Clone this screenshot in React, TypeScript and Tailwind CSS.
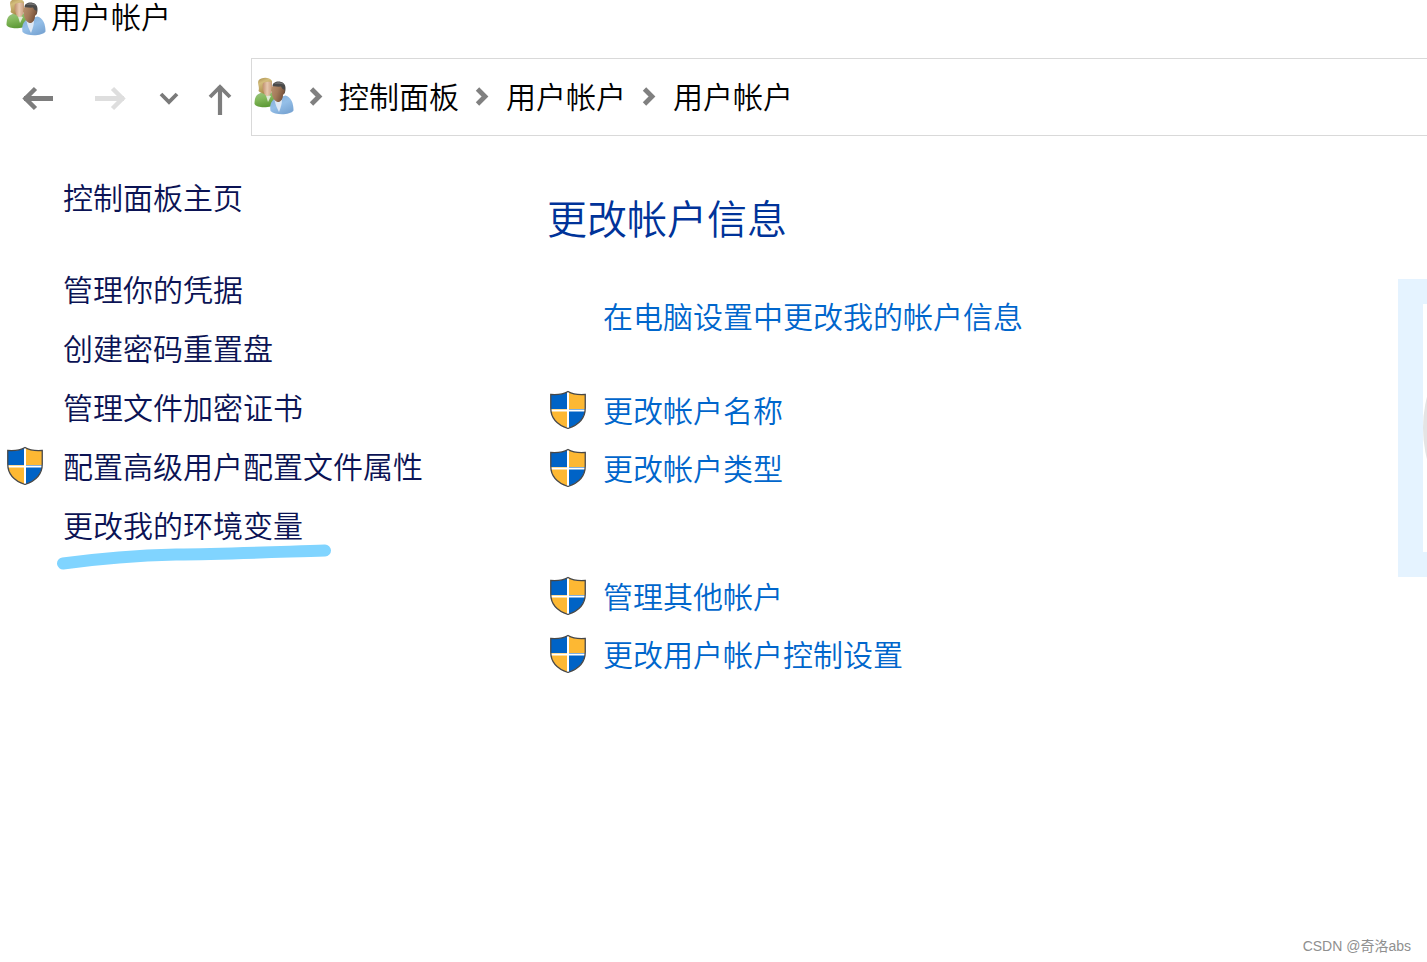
import { Fragment } from 'react';

const crumbs = ['控制面板', '用户帐户', '用户帐户'];

const sideLinks = [
  { label: '管理你的凭据' },
  { label: '创建密码重置盘' },
  { label: '管理文件加密证书' },
  { label: '配置高级用户配置文件属性', shield: true },
  { label: '更改我的环境变量', marked: true },
];

const taskGroups = [
  [{ label: '在电脑设置中更改我的帐户信息', shield: false }],
  [
    { label: '更改帐户名称', shield: true },
    { label: '更改帐户类型', shield: true },
  ],
  [
    { label: '管理其他帐户', shield: true },
    { label: '更改用户帐户控制设置', shield: true },
  ],
];

const groupMargins = ['mt-[38px]', 'mt-9', 'mt-[70px]'];

function UsersIcon({ id }: { id: string }) {
  return (
    <svg viewBox="0 0 40 40" className="size-10 shrink-0" aria-hidden="true">
      <defs>
        <linearGradient id={`${id}-green`} x1="0" y1="0" x2="0.3" y2="1">
          <stop offset="0" stopColor="#9fc587" />
          <stop offset="0.5" stopColor="#82b85a" />
          <stop offset="1" stopColor="#5f9b38" />
        </linearGradient>
        <linearGradient id={`${id}-blue`} x1="0" y1="0" x2="0.6" y2="1">
          <stop offset="0" stopColor="#84acd6" />
          <stop offset="0.55" stopColor="#94bfe8" />
          <stop offset="1" stopColor="#7aa6d4" />
        </linearGradient>
        <linearGradient id={`${id}-hair`} x1="0" y1="0" x2="0.4" y2="1">
          <stop offset="0" stopColor="#a98d4c" />
          <stop offset="0.35" stopColor="#d3bd7c" />
          <stop offset="1" stopColor="#a88a48" />
        </linearGradient>
        <linearGradient id={`${id}-light`} x1="0" y1="0" x2="1" y2="0">
          <stop offset="0" stopColor="#c08f6c" />
          <stop offset="0.5" stopColor="#e6c8ae" />
          <stop offset="1" stopColor="#c99d80" />
        </linearGradient>
        <linearGradient id={`${id}-dark`} x1="0" y1="0" x2="1" y2="0.4">
          <stop offset="0" stopColor="#b8906e" />
          <stop offset="0.5" stopColor="#a37a5a" />
          <stop offset="1" stopColor="#755039" />
        </linearGradient>
      </defs>
      <path d="M0.500 28C0.500 22 2 18.500 6.500 17L17 16C20 18 22 22 22 28C19 31.500 3 33 0.500 28Z" fill={`url(#${id}-green)`} />
      <path d="M11.500 18L14 26L17 20Z" fill="#dfe9d6" />
      <path d="M4.500 15C6 11 3 8 4.500 4.500C7 1 15.500 0.500 18 5L18 15C15 19 8 18.500 4.500 15Z" fill={`url(#${id}-hair)`} />
      <path d="M9 7C11 6 15 5.500 17.500 6C18 9 18 15 16.500 18C15 20.500 12 21 10.500 18C9 15 8 10 9 7Z" fill={`url(#${id}-light)`} />
      <path d="M16.500 35C15.500 29 17 25 21 22.500L31.500 19.500C37 21 39.500 27 39.500 34.500C36 39.500 21 39.500 16.500 35Z" fill={`url(#${id}-blue)`} />
      <path d="M20.500 24C21.500 29 23 32 25 36C26.500 32 28 28 28 24Z" fill="#dde8f4" />
      <path d="M18.500 10C18.500 4 31.500 3.500 31.500 12C31.500 15 31 17 30 18L21 14Z" fill="#4a4a4a" />
      <path d="M20 8C22.500 5.500 28 5.500 30 8.500C27 7.500 23 7.500 20 8Z" fill="#757575" />
      <path d="M18 10.500C20.500 10 24 11 27 10.500C28 12 28.500 14 30.500 13.500C31.500 16 30 18 29 19C29 23 26.500 26.500 23.500 26C19 25 16.500 17 18 10.500Z" fill={`url(#${id}-dark)`} />
    </svg>
  );
}

function ShieldIcon() {
  return (
    <svg viewBox="0 0 36 40" className="h-10 w-9 shrink-0" aria-hidden="true">
      <path d="M18 1.500C13 4.500 7 5 1 4.500V19H18Z" fill="#0063c6" />
      <path d="M18 1.500C23 4.500 29 5 35 4.500V19H18Z" fill="#fdb833" />
      <path d="M1 19C1 29 9 35 18 38.500V19Z" fill="#fdb833" />
      <path d="M35 19C35 29 27 35 18 38.500V19Z" fill="#0063c6" />
      <path d="M18 2V38M1 20.500H35" stroke="#ffffff" strokeWidth="2" />
      <path
        d="M18 1.500C13 4.500 7 5 0.750 4.500V18C0.750 29 9 35.500 18 38.500C27 35.500 35.250 29 35.250 18V4.500C29 5 23 4.500 18 1.500Z"
        fill="none"
        stroke="#474747"
        strokeWidth="1.300"
      />
    </svg>
  );
}

function Chevron() {
  return (
    <svg viewBox="0 0 14 20" className="h-5 w-3.5 shrink-0" aria-hidden="true">
      <path d="M2.500 2L10 9.500L2.500 17" fill="none" stroke="#808080" strokeWidth="4.800" />
    </svg>
  );
}

function NavButtons() {
  return (
    <nav className="flex w-[251px] shrink-0 items-center pt-1 pl-[22px]">
      <button type="button" aria-label="返回" className="mr-10">
        <svg viewBox="0 0 32 32" className="size-8" fill="none" stroke="#7d7d7d">
          <path d="M2 15.500H31" strokeWidth="5" />
          <path d="M13.500 5.500L3.500 15.500L13.500 25.500" strokeWidth="4.500" />
        </svg>
      </button>
      <button type="button" aria-label="前进" disabled className="mr-8">
        <svg viewBox="0 0 32 32" className="size-8" fill="none" stroke="#dedede">
          <path d="M1 15.500H30" strokeWidth="5" />
          <path d="M18.500 5.500L28.500 15.500L18.500 25.500" strokeWidth="4.500" />
        </svg>
      </button>
      <button type="button" aria-label="最近浏览的位置" className="mr-7">
        <svg viewBox="0 0 22 32" className="h-8 w-[22px]" fill="none" stroke="#7a7a7a">
          <path d="M3 11L11 19L19 11" strokeWidth="3.800" />
        </svg>
      </button>
      <button type="button" aria-label="上移">
        <svg viewBox="0 0 24 32" className="h-8 w-6" fill="none" stroke="#7d7d7d">
          <path d="M12 3V33" strokeWidth="4.200" />
          <path d="M2 14L12 4L22 14" strokeWidth="3.800" />
        </svg>
      </button>
    </nav>
  );
}

export default function App() {
  return (
    <div className="flex min-h-screen flex-col overflow-hidden bg-white font-['Liberation_Sans','Noto_Sans_CJK_SC',sans-serif] text-[30px] font-[350] text-black">
      {/* Title bar */}
      <header className="flex h-[58px] items-start gap-[5px] pl-1.5">
        <div className="-mt-[3px]">
          <UsersIcon id="title" />
        </div>
        <h1 className="leading-9">用户帐户</h1>
      </header>

      {/* Address bar */}
      <div className="flex h-[78px]">
        <NavButtons />
        <div className="flex flex-1 items-center border border-r-0 border-[#d9d9d9] pl-0.5">
          <div className="pb-0.5">
            <UsersIcon id="address" />
          </div>
          {crumbs.map((crumb, index) => (
            <Fragment key={index}>
              <span className={index === 0 ? 'mr-4 ml-[15px]' : 'mr-[17px] ml-4'}>
                <Chevron />
              </span>
              <a href="#" className="pt-0.5 leading-10 whitespace-nowrap">{crumb}</a>
            </Fragment>
          ))}
        </div>
      </div>

      <div className="flex">
        {/* Sidebar */}
        <aside className="w-[547px] shrink-0 pt-[35px] text-[#0b1354]">
          <a href="#" className="ml-[63px] block leading-[56px]">控制面板主页</a>
          <ul className="mt-[34px]">
            {sideLinks.map((link) => (
              <li key={link.label} className="relative flex h-[59px] items-center pl-[7px]">
                <span className="mr-5 w-9 shrink-0 pb-1">{link.shield && <ShieldIcon />}</span>
                <a href="#" className="whitespace-nowrap">{link.label}</a>
                {link.marked && (
                  <svg viewBox="0 0 276 30" className="absolute top-11 left-14 h-[30px] w-[276px]" fill="none" aria-hidden="true">
                    <path d="M7 22.500C40 18 80 14.500 120 13.500C170 13 220 11 269 9.500" stroke="#80d4ff" strokeWidth="12" strokeLinecap="round" />
                  </svg>
                )}
              </li>
            ))}
          </ul>
        </aside>

        {/* Account tasks */}
        <main className="min-w-0 flex-1 pt-[54px]">
          <h2 className="text-[40px] leading-[60px] text-[#003399]">更改帐户信息</h2>
          {taskGroups.map((group, index) => (
            <ul key={index} className={groupMargins[index]}>
              {group.map((task) => (
                <li key={task.label} className="flex h-[58px] items-center pl-[3px]">
                  <span className="mr-[17px] w-9 shrink-0 pb-0.5">{task.shield && <ShieldIcon />}</span>
                  <a href="#" className="whitespace-nowrap text-[#0066cc]">{task.label}</a>
                </li>
              ))}
            </ul>
          ))}
        </main>

        {/* Account picture, cut off by the window edge */}
        <div className="mt-[143px] w-[29px] shrink-0 overflow-hidden">
          <div className="size-[298px] border-[25px] border-[#e5f3ff] bg-white">
            <div className="size-[248px] rounded-full bg-[#e4e4e4]" />
          </div>
        </div>
      </div>

      <footer className="mt-auto pr-4 pb-1.5 text-right text-sm font-normal text-[#8f8f8f]">
        CSDN @奇洛abs
      </footer>
    </div>
  );
}
